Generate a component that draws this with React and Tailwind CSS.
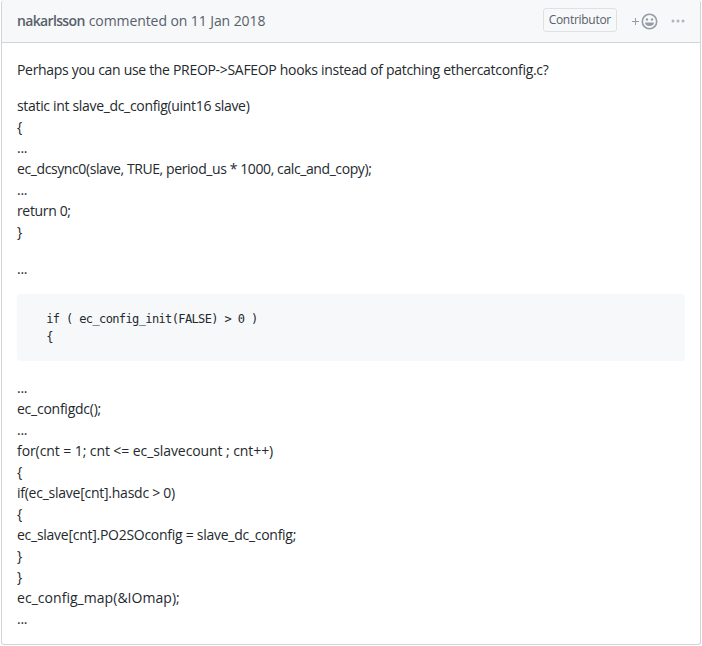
function Line({ children, className = "" }) { return <div className={"h-[21px] " + className}>{children}</div>; }
export default function App() {
  return (
    <div className="w-[702px] h-[646px] bg-white pl-px pr-px font-['Open_Sans','Noto_Sans',sans-serif]">
      <div className="w-[700px] h-[645px] border border-[#d1d5da] rounded-[3px] overflow-hidden flex flex-col border-t-0">
        <div className="h-[43px] shrink-0 bg-[#f6f8fa] border-b border-[#d1d5da] flex items-center pl-[15px] pr-[15px] pb-[2px] text-[14px] text-[#586069]">
          <span className="font-semibold tracking-[-0.65px]">nakarlsson</span>
          <span className="ml-1 tracking-[-0.08px]">commented on 11 Jan 2018</span>
          <span className="ml-auto h-[24px] px-[5px] border border-[#dfe2e5] rounded-[3px] text-[12px] tracking-[-0.28px] flex items-center">Contributor</span>
          <svg className="ml-[14px] mt-[2px]" width="28" height="18" viewBox="0 0 28 18" fill="none">
            <path d="M1 9.500h7M4.500 6v7" stroke="#959da5" strokeWidth="1" />
            <circle cx="18.500" cy="9.500" r="7.200" stroke="#959da5" strokeWidth="1.600" />
            <circle cx="16" cy="7.500" r="1.200" fill="#959da5" />
            <circle cx="21" cy="7.500" r="1.200" fill="#959da5" />
            <path d="M14 10.500h9c0 2.500-2 3.500-4.500 3.500s-4.500-1-4.500-3.500z" fill="#959da5" />
          </svg>
          <svg className="ml-[12px] mt-[1px]" width="14" height="4" viewBox="0 0 14 4" fill="#b0b6bd">
            <circle cx="2" cy="2" r="1.500" /><circle cx="7" cy="2" r="1.500" /><circle cx="12" cy="2" r="1.500" />
          </svg>
        </div>
        <div className="px-[15px] pt-[16px] text-[14px] leading-[21px] tracking-[-0.25px] text-[#24292e]">
          <p className="mb-[15px] tracking-[-0.31px]">Perhaps you can use the PREOP-&gt;SAFEOP hooks instead of patching ethercatconfig.c?</p>
          <div className="mb-[16px]">
            <Line className="tracking-[-0.325px]">static int slave_dc_config(uint16 slave)</Line>
            <Line>{"{"}</Line>
            <Line>...</Line>
            <Line className="tracking-[-0.405px]">ec_dcsync0(slave, TRUE, period_us * 1000, calc_and_copy);</Line>
            <Line>...</Line>
            <Line className="tracking-[-0.35px]">return 0;</Line>
            <Line>{"}"}</Line>
          </div>
          <p className="mb-[15px]">...</p>
          <pre className="h-[67px] mb-[16px] bg-[#f6f8fa] rounded-[3px] p-4 text-[12px] leading-[18px] tracking-[-0.62px] font-['DejaVu_Sans_Mono','Liberation_Mono',monospace] text-[#24292e]">{"  if ( ec_config_init(FALSE) > 0 )\n  {"}</pre>
          <div>
            <Line>...</Line>
            <Line>ec_configdc();</Line>
            <Line>...</Line>
            <Line className="tracking-[-0.083px]">{"for(cnt = 1; cnt <= ec_slavecount ; cnt++)"}</Line>
            <Line>{"{"}</Line>
            <Line>{"if(ec_slave[cnt].hasdc > 0)"}</Line>
            <Line>{"{"}</Line>
            <Line className="tracking-[-0.27px]">ec_slave[cnt].PO2SOconfig = slave_dc_config;</Line>
            <Line>{"}"}</Line>
            <Line>{"}"}</Line>
            <Line className="tracking-[0.04px]">ec_config_map(&amp;IOmap);</Line>
            <Line>...</Line>
          </div>
        </div>
      </div>
    </div>
  );
}
